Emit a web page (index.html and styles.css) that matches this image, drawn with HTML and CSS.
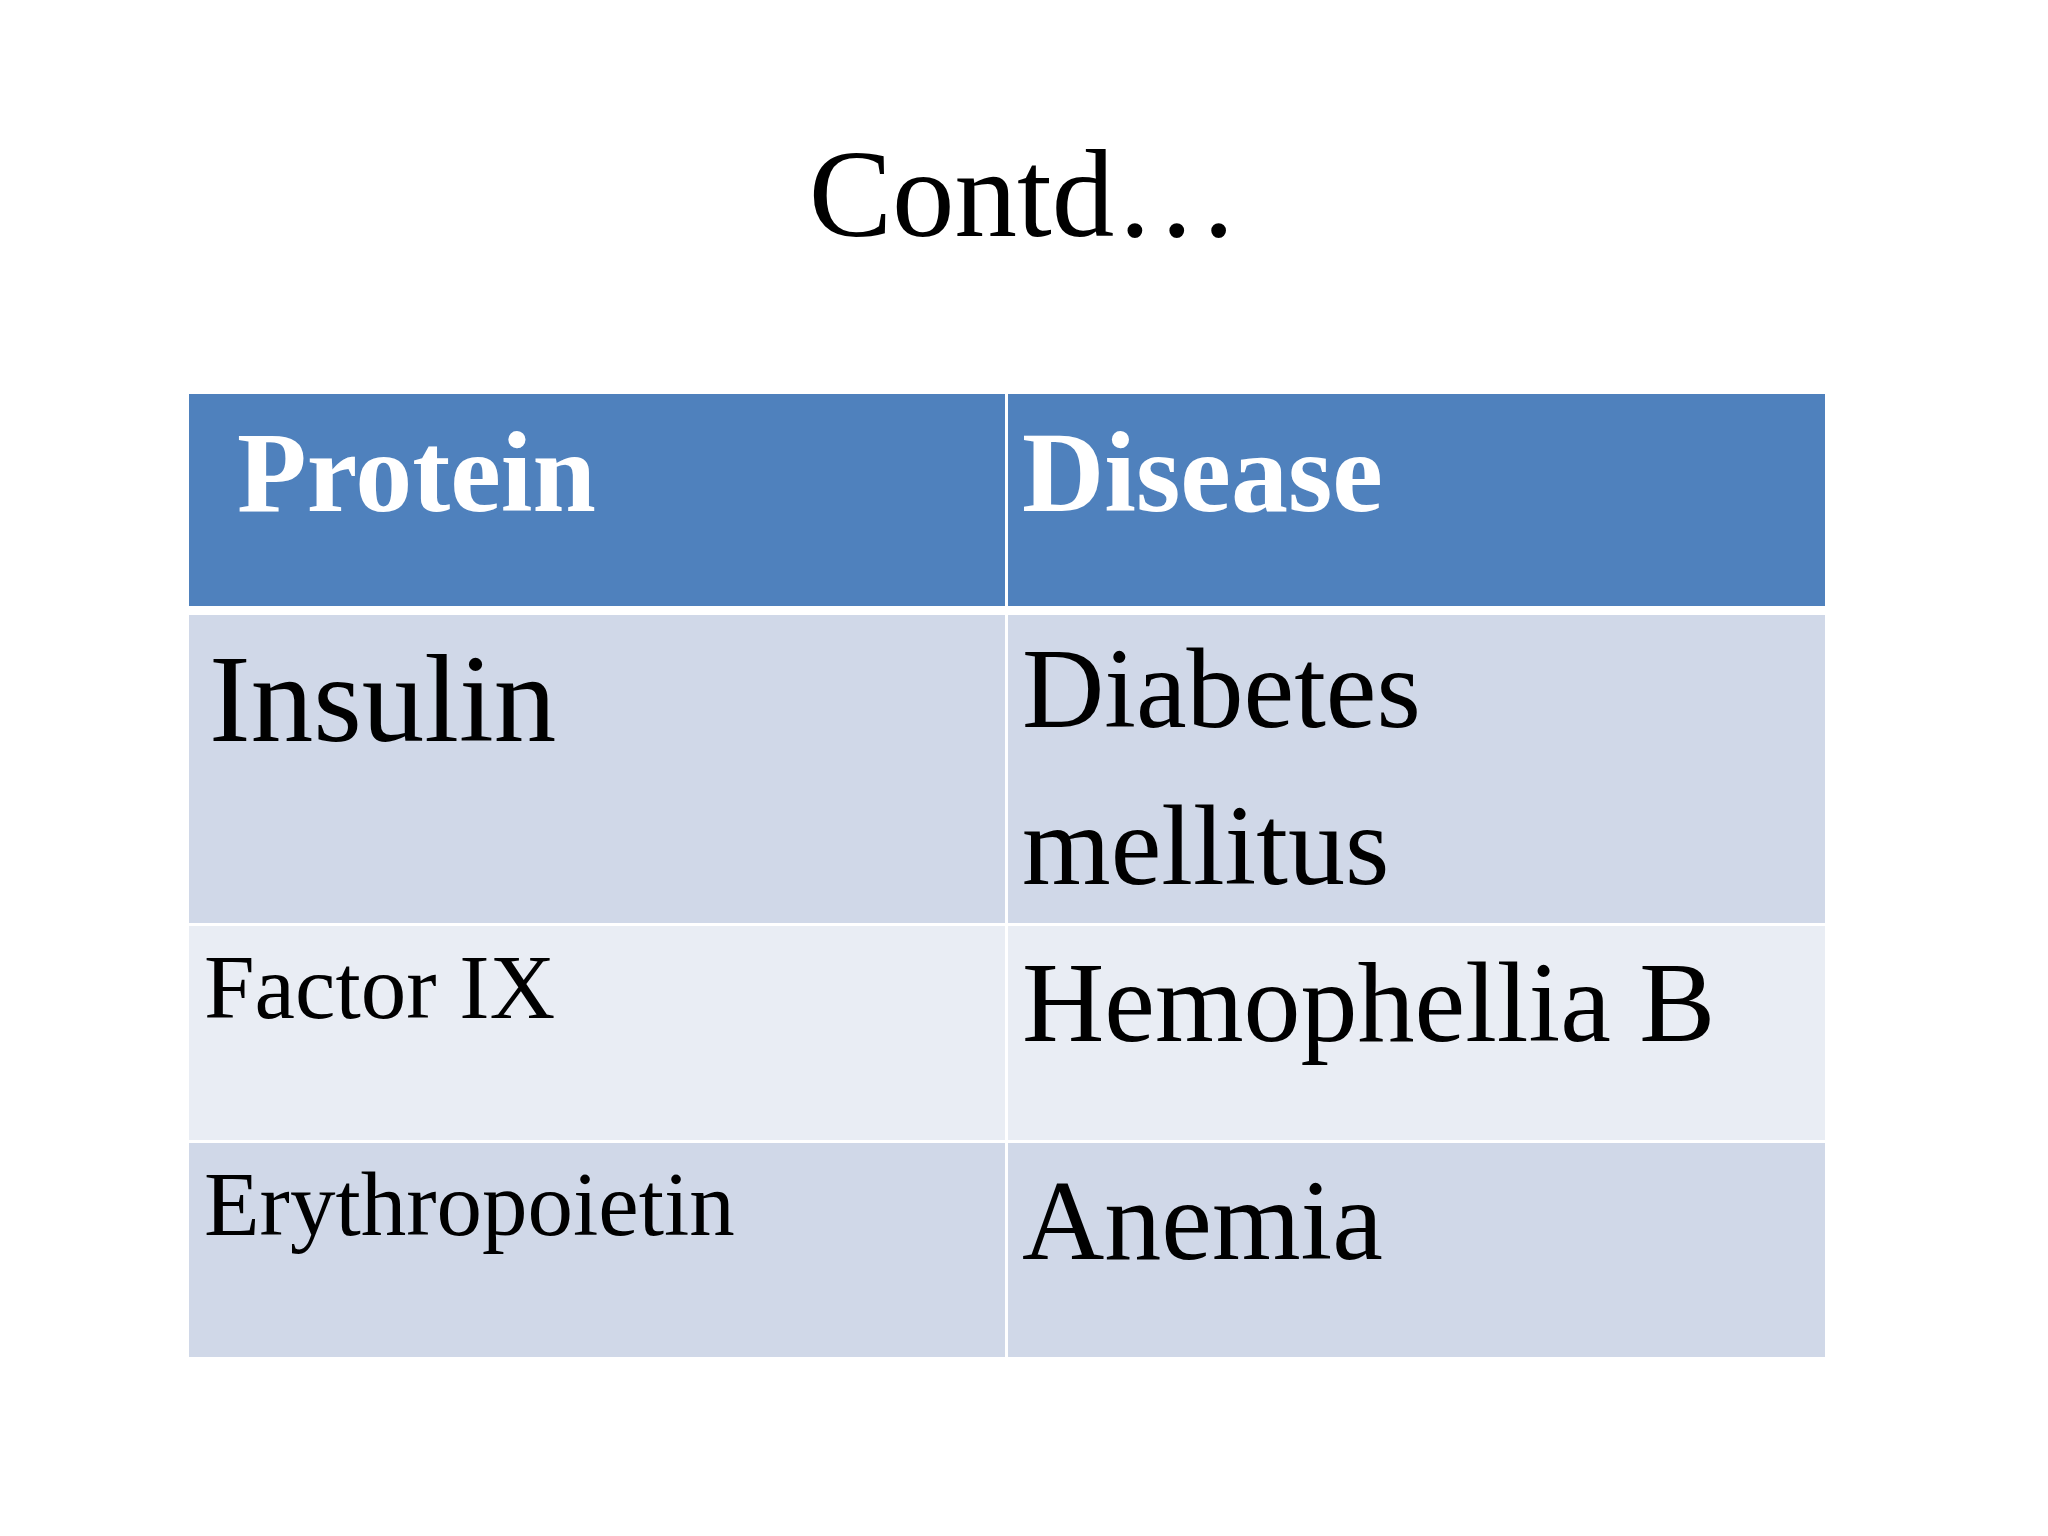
FILE: index.html
```html
<!DOCTYPE html>
<html lang="en">
<head>
<meta charset="utf-8">
<title>Contd…</title>
<link rel="stylesheet" href="styles.css">
</head>
<body>
<main class="slide">
  <h1 class="title">Contd…</h1>
  <div class="table">
    <div class="cell head pad-protein">Protein</div>
    <div class="cell head pad-right">Disease</div>

    <div class="cell band-dark big pad-insulin">Insulin</div>
    <div class="cell band-dark mid pad-right pad-diabetes">
      <span class="line">Diabetes</span>
      <span class="line line-next">mellitus</span>
    </div>

    <div class="cell band-light small pad-left pad-small">Factor IX</div>
    <div class="cell band-light mid pad-right pad-hemo">Hemophellia B</div>

    <div class="cell band-dark small pad-left pad-small">Erythropoietin</div>
    <div class="cell band-dark mid pad-right pad-anemia">Anemia</div>
  </div>
</main>
</body>
</html>
```

FILE: styles.css
```css
html, body {
  margin: 0;
  padding: 0;
  background: #ffffff;
}

body {
  font-family: "Liberation Serif", "Times New Roman", serif;
  color: #000000;
}

.slide {
  width: 2048px;
  height: 1536px;
  box-sizing: border-box;
  padding-top: 132px;
  background: #ffffff;
}

.title {
  margin: 0;
  font-size: 125px;
  line-height: 125px;
  font-weight: normal;
  text-align: center;
}

.table {
  margin-top: 137px;
  margin-left: 189px;
  width: 1636px;
  display: grid;
  grid-template-columns: 816px 817px;
  grid-template-rows: 218px 308px 214px 214px;
  column-gap: 3px;
  row-gap: 3px;
  background: #ffffff;
}

.cell {
  box-sizing: border-box;
  white-space: nowrap;
  overflow: hidden;
}

.head {
  background: #4f81bd;
  color: #ffffff;
  font-weight: bold;
  font-size: 114px;
  line-height: 1;
  margin-bottom: 6px;
  padding-top: 22px;
}

.band-dark {
  background: #d0d8e8;
}

.band-light {
  background: #e9edf4;
}

.big {
  font-size: 125px;
  line-height: 1;
}

.mid {
  font-size: 114px;
  line-height: 1;
}

.small {
  font-size: 91px;
  line-height: 1;
}

.pad-protein {
  padding-left: 48px;
}

.pad-right {
  padding-left: 14px;
}

.pad-left {
  padding-left: 15px;
}

.pad-insulin {
  padding-left: 20px;
  padding-top: 22px;
}

.pad-diabetes {
  padding-top: 17px;
}

.line {
  display: block;
}

.line-next {
  margin-top: 43px;
}

.pad-small {
  padding-top: 16px;
}

.pad-hemo {
  padding-top: 20px;
}

.pad-anemia {
  padding-top: 21px;
}
```
